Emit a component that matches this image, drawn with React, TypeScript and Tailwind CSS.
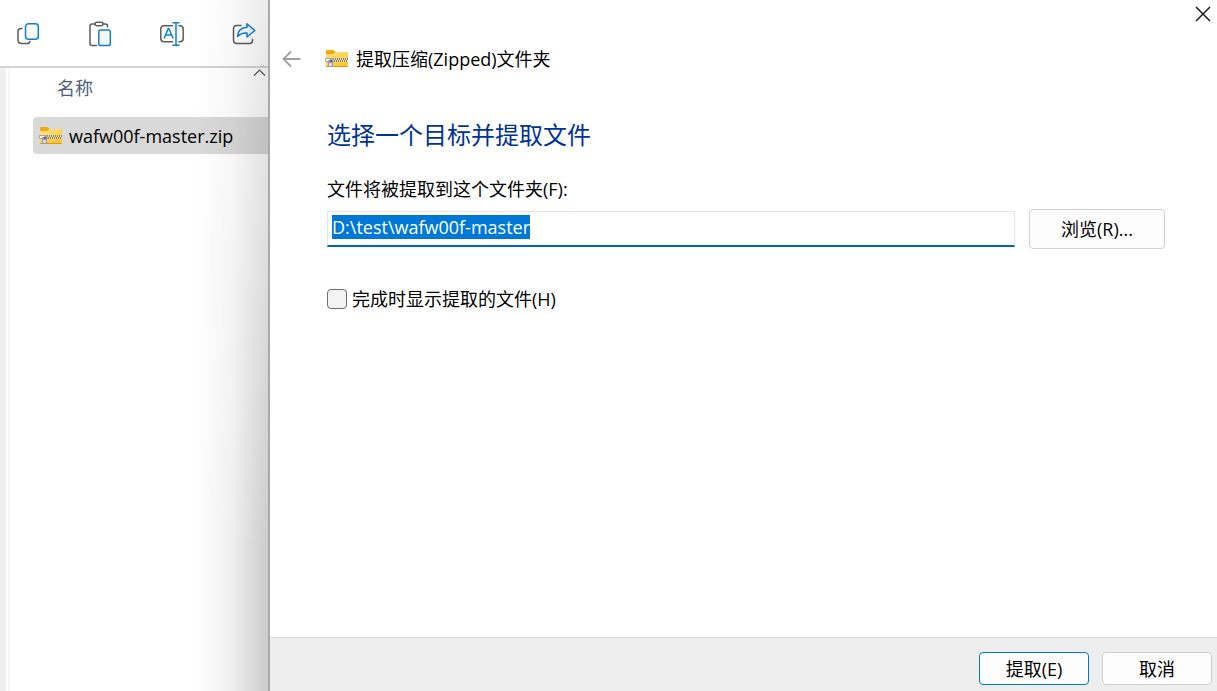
import { useEffect, useRef, useState } from "react";

function ZipFolderIcon() {
  return (
    <svg width="24" height="20" viewBox="0 0 24 20" className="shrink-0" aria-hidden="true">
      <defs>
        <linearGradient id="zip-folder" x1="0" y1="0" x2="0.6" y2="1">
          <stop offset="0" stopColor="#ffe387" />
          <stop offset="1" stopColor="#fcc636" />
        </linearGradient>
      </defs>
      <path d="M1 2Q1 1 2 1h5.500q.8 0 1.400.6L10.300 3H22q1 0 1 1v6H1z" fill="#f3a80c" />
      <path d="M1 5h7q.8 0 1.400-.7L10.600 3H22q1 0 1 1V17q0 1-1 1H2q-1 0-1-1z" fill="url(#zip-folder)" />
      <path d="M1 17h22q0 1-1 1H2q-1 0-1-1z" fill="#e69b05" />
      <rect x="8" y="9" width="15" height="4" fill="#e9dcae" />
      <path d="M8 10h15" stroke="#6b664f" strokeWidth="1.400" strokeDasharray="1 1" />
      <path d="M9 12h14" stroke="#6b664f" strokeWidth="1.400" strokeDasharray="1 1" />
      <path d="M0 10Q0 9 1 9h6l2 1v3H1q-1 0-1-1z" fill="#a3a6aa" />
      <rect x="1" y="10" width="4" height="2" fill="#f2f4f6" />
      <rect x="3" y="11" width="5" height="7" rx="1" fill="#9a9da2" />
      <rect x="5" y="11" width="2" height="2" fill="#5f6368" />
      <rect x="4" y="14" width="3" height="3" rx="1" fill="#dfe1e4" />
    </svg>
  );
}

function CopyIcon() {
  return (
    <svg width="24" height="24" viewBox="0 0 24 24" fill="none" strokeWidth="1.500" strokeLinecap="round">
      <path d="M6 6.500H5Q2 6.500 2 9.500v8.500Q2 21.500 5.500 21.500h5.500q2.500 0 3-2" stroke="#5c5c5c" />
      <rect x="9.500" y="1.800" width="12.800" height="15.500" rx="3" fill="#f8f8f8" stroke="#0f7fd8" />
    </svg>
  );
}

function PasteIcon() {
  return (
    <svg width="24" height="26" viewBox="0 0 24 26" fill="none" strokeWidth="1.500" strokeLinecap="round">
      <path d="M7 3H4Q2 3 2 5v17.500q0 2 2 2h4.500M15 3h2.500q2 0 2 2v1" stroke="#5c5c5c" />
      <rect x="7" y="1.300" width="8" height="3.400" rx="1.700" stroke="#5c5c5c" />
      <rect x="10.800" y="9" width="11.500" height="15.500" rx="1.800" fill="#f8f8f8" stroke="#0f7fd8" />
    </svg>
  );
}

function RenameIcon() {
  return (
    <svg width="26" height="26" viewBox="0 0 26 26" fill="none" strokeWidth="1.500" strokeLinecap="round">
      <path d="M13.500 4.800H5Q1.800 4.800 1.800 8v9.500q0 3.200 3.200 3.200h8.500M20 4.800h1q3.200 0 3.200 3.200v9.500q0 3.200-3.200 3.200h-1" stroke="#5c5c5c" />
      <path d="M5.300 17 9.300 7.500h.6l4 9.500M6.700 14h6" stroke="#0f7fd8" />
      <path d="M14 1.700h6M14 24.300h6M17 1.700v22.600" stroke="#0f7fd8" />
    </svg>
  );
}

function ShareIcon() {
  return (
    <svg width="26" height="26" viewBox="0 0 26 26" fill="none" strokeWidth="1.500" strokeLinecap="round" strokeLinejoin="round">
      <path d="M10 4.500H6Q2.500 4.500 2.500 8v11q0 3.500 3.500 3.500h12.500q3 0 3-3v-1" stroke="#5c5c5c" />
      <path d="M16 2.800 23.800 9.500 16 16v-4q-5.500-.5-9.500 3.500.5-8.700 9.500-9.200z" fill="#f8f8f8" stroke="#0f7fd8" />
    </svg>
  );
}

const tools = [
  { label: "复制", icon: <CopyIcon /> },
  { label: "粘贴", icon: <PasteIcon /> },
  { label: "重命名", icon: <RenameIcon /> },
  { label: "共享", icon: <ShareIcon /> },
];

function ExplorerPane() {
  return (
    <aside className="relative flex w-[268px] shrink-0 flex-col overflow-hidden bg-white">
      <div className="flex h-[68px] items-center border-b-2 border-[#d4d4d4] pt-0.5">
        {tools.map((tool) => (
          <button
            key={tool.label}
            type="button"
            aria-label={tool.label}
            className="mr-4 flex h-14 w-14 shrink-0 items-center justify-center"
          >
            {tool.icon}
          </button>
        ))}
      </div>
      <div className="flex flex-1">
        <div className="w-1.5 shrink-0 bg-[#f0f0f0]" />
        <div className="ml-0.5 flex-1 border-l-2 border-[#f7f7f7] pl-[23px]">
          <div className="flex h-[49px] justify-between pl-6">
            <span className="pt-2 leading-6 text-[#4c607a]">名称</span>
            <svg width="16" height="10" viewBox="0 0 16 10" fill="none" aria-hidden="true">
              <path d="M2 7.500 7.500 2 13 7.500" stroke="#555" strokeWidth="1.200" />
            </svg>
          </div>
          <div className="flex h-[37px] items-center gap-1.5 rounded-l-sm bg-[#d9d9d9] pl-1.5">
            <ZipFolderIcon />
            <span>wafw00f-master.zip</span>
          </div>
        </div>
      </div>
      {/* shadow cast by the dialog */}
      <div className="pointer-events-none absolute inset-y-0 right-0 w-[72px] bg-linear-to-l from-black/20 via-black/6 to-transparent mask-t-from-20% mask-t-to-150%" />
    </aside>
  );
}

function ExtractDialog() {
  const [path, setPath] = useState("D:\\test\\wafw00f-master");
  const [showFiles, setShowFiles] = useState(false);
  const pathRef = useRef<HTMLInputElement>(null);

  useEffect(() => {
    pathRef.current?.focus();
    pathRef.current?.select();
  }, []);

  return (
    <main className="flex min-w-0 flex-1 flex-col border-l-2 border-[#a9a9a9] bg-white">
      <div className="flex h-[27px] justify-end">
        <button type="button" aria-label="关闭" className="flex w-7 items-center justify-center">
          <svg width="16" height="16" viewBox="0 0 16 16" fill="none">
            <path d="M1 1l14 14M15 1 1 15" stroke="#1a1a1a" strokeWidth="1.500" />
          </svg>
        </button>
      </div>

      <header className="flex h-16 items-center pl-3">
        <button type="button" aria-label="返回" className="mr-6">
          <svg width="19" height="18" viewBox="0 0 19 18" fill="none">
            <path d="M18.500 9H1.500M9 1.500 1.500 9 9 16.500" stroke="#a0a0a0" strokeWidth="1.800" />
          </svg>
        </button>
        <ZipFolderIcon />
        <span className="ml-[7px]">提取压缩(Zipped)文件夹</span>
      </header>

      <form className="flex flex-1 flex-col" onSubmit={(e) => e.preventDefault()}>
        <div className="flex-1 pl-[57px] pr-[52px] pt-[26px]">
          <h1 className="text-2xl leading-9 text-[#003399]">选择一个目标并提取文件</h1>
          <label htmlFor="target" className="mt-6 block leading-6">
            文件将被提取到这个文件夹(F):
          </label>
          <div className="mt-2 flex items-center gap-3.5">
            <input
              id="target"
              ref={pathRef}
              type="text"
              value={path}
              onChange={(e) => setPath(e.target.value)}
              className="h-9 min-w-0 flex-1 border border-b-2 border-[#e5e5e5] border-b-[#0067b8] px-1 pb-1 outline-none selection:bg-[#0078d7] selection:text-white"
            />
            <button type="button" className="h-10 w-[136px] rounded border border-[#cfcfcf] bg-[#fdfdfd]">
              浏览(R)...
            </button>
          </div>
          <label className="mt-[38px] flex items-center gap-[5px]">
            <input
              type="checkbox"
              checked={showFiles}
              onChange={(e) => setShowFiles(e.target.checked)}
              className="h-5 w-5 appearance-none rounded border border-[#6b6b6b] bg-[#f3f3f3] checked:bg-[#0067b8]"
            />
            完成时显示提取的文件(H)
          </label>
        </div>

        <footer className="flex justify-end gap-[13px] border-t border-[#dcdcdc] bg-[#eeeeee] pb-1.5 pr-[5px] pt-3.5">
          <button type="submit" className="h-[33px] w-[110px] rounded border border-[#0078d4] bg-[#fdfdfd]">
            提取(E)
          </button>
          <button type="button" className="h-[33px] w-[110px] rounded border border-[#cfcfcf] bg-[#fdfdfd]">
            取消
          </button>
        </footer>
      </form>
    </main>
  );
}

export default function App() {
  return (
    <div className="flex min-h-screen font-['Open_Sans','Noto_Sans_CJK_SC',sans-serif] text-lg leading-6 text-black">
      <ExplorerPane />
      <ExtractDialog />
    </div>
  );
}
